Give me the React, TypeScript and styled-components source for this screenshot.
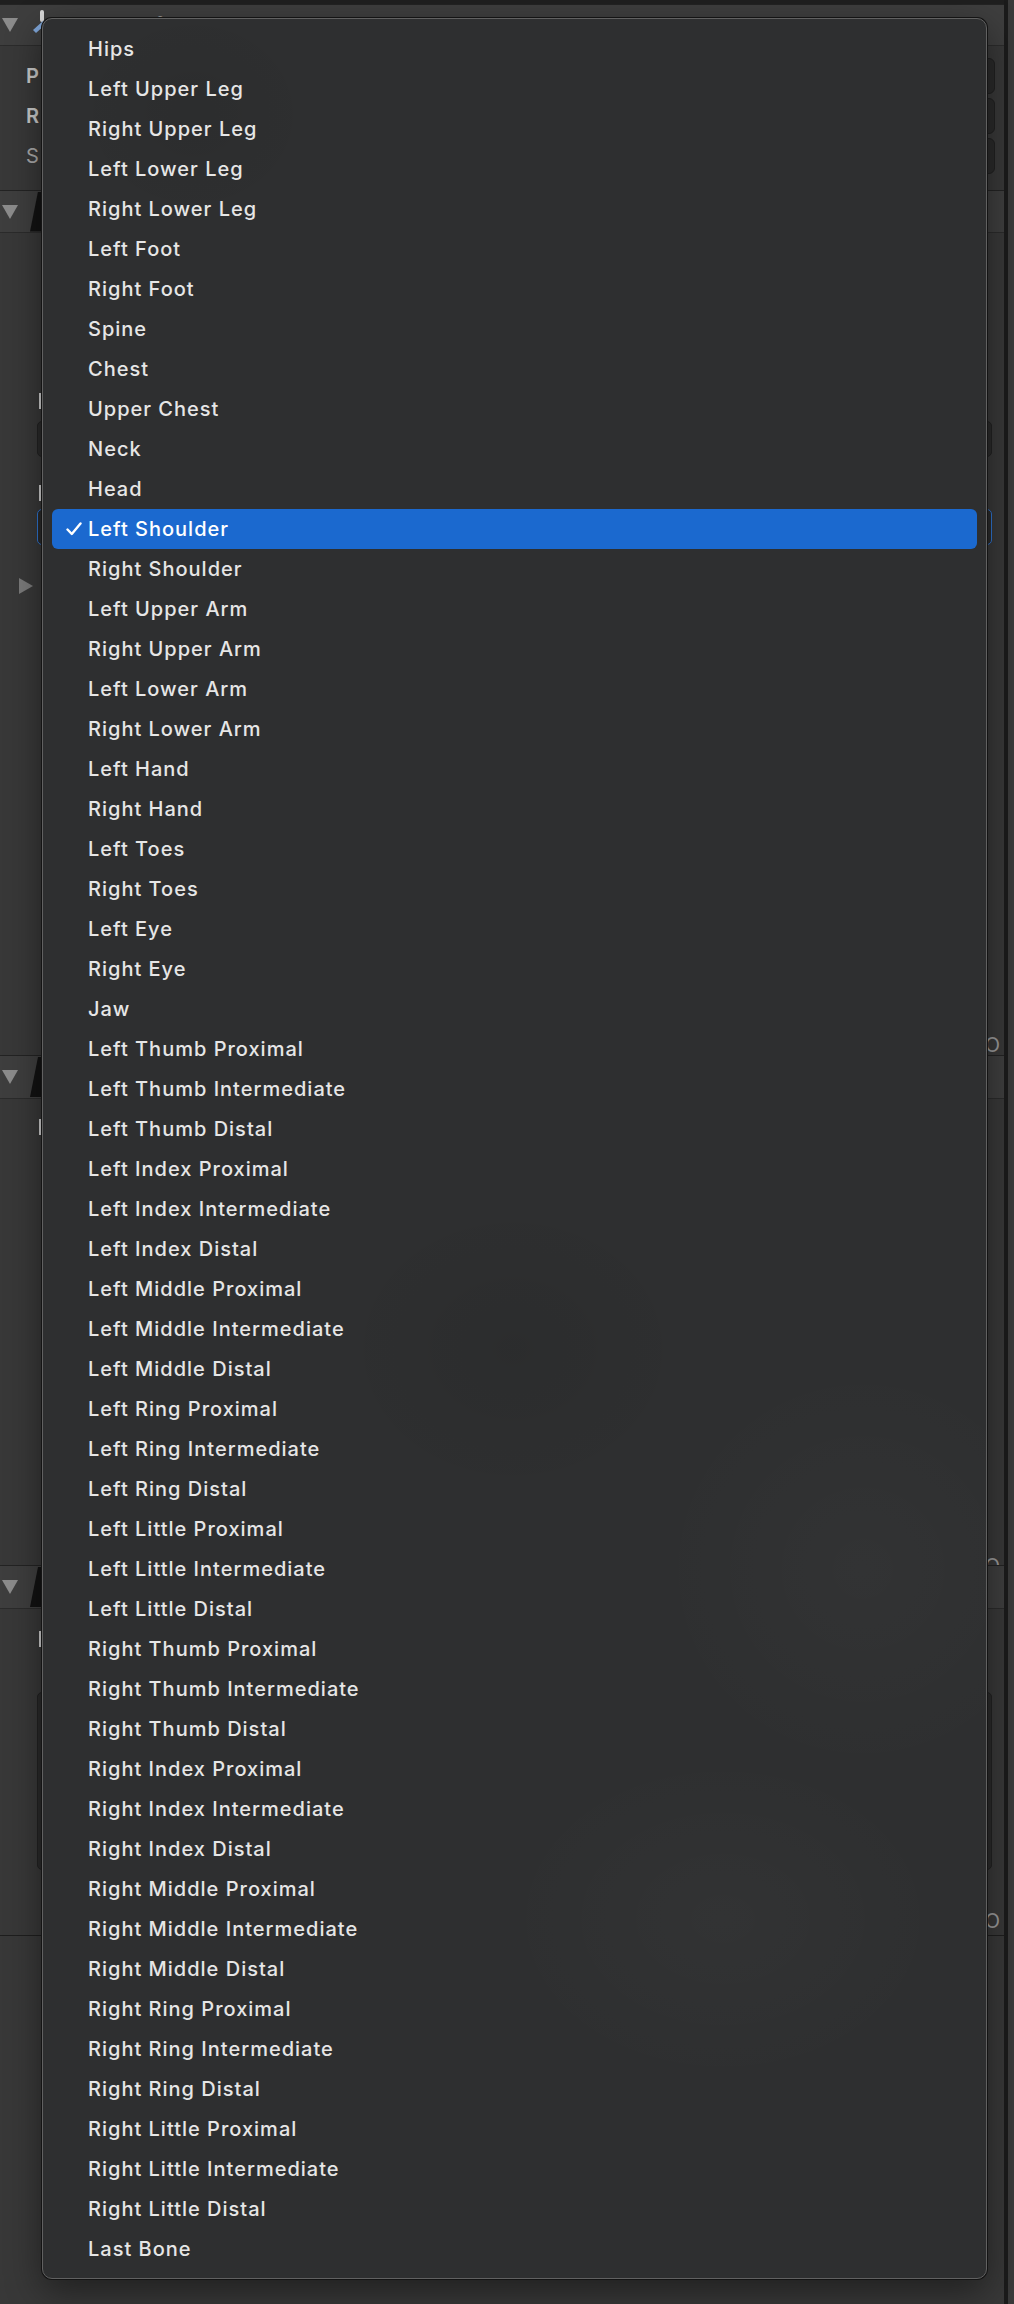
import styled, { createGlobalStyle } from 'styled-components';

const GlobalStyle = createGlobalStyle`
  html, body {
    margin: 0;
    padding: 0;
    background: #383838;
  }
  body {
    font-family: Inter, "Noto Sans", "Liberation Sans", sans-serif;
  }
`;

const BONES = [
  'Hips', 'Left Upper Leg', 'Right Upper Leg', 'Left Lower Leg', 'Right Lower Leg',
  'Left Foot', 'Right Foot', 'Spine', 'Chest', 'Upper Chest', 'Neck', 'Head',
  'Left Shoulder', 'Right Shoulder', 'Left Upper Arm', 'Right Upper Arm',
  'Left Lower Arm', 'Right Lower Arm', 'Left Hand', 'Right Hand', 'Left Toes',
  'Right Toes', 'Left Eye', 'Right Eye', 'Jaw',
  'Left Thumb Proximal', 'Left Thumb Intermediate', 'Left Thumb Distal',
  'Left Index Proximal', 'Left Index Intermediate', 'Left Index Distal',
  'Left Middle Proximal', 'Left Middle Intermediate', 'Left Middle Distal',
  'Left Ring Proximal', 'Left Ring Intermediate', 'Left Ring Distal',
  'Left Little Proximal', 'Left Little Intermediate', 'Left Little Distal',
  'Right Thumb Proximal', 'Right Thumb Intermediate', 'Right Thumb Distal',
  'Right Index Proximal', 'Right Index Intermediate', 'Right Index Distal',
  'Right Middle Proximal', 'Right Middle Intermediate', 'Right Middle Distal',
  'Right Ring Proximal', 'Right Ring Intermediate', 'Right Ring Distal',
  'Right Little Proximal', 'Right Little Intermediate', 'Right Little Distal',
  'Last Bone',
];

const SELECTED = 'Left Shoulder';

/* ---------- inspector behind the popup ---------- */

const Page = styled.div`
  position: relative;
  width: 1014px;
  height: 2304px;
  overflow: hidden;
  display: flex;
  background: #383838;
`;

const Inspector = styled.div`
  flex: 1;
  display: flex;
  flex-direction: column;
  border-top: 4px solid #1f1f1f;
`;

const Scrollbar = styled.div`
  width: 4px;
  background: #1b1b1b;
`;

const Gutter = styled.div`
  width: 6px;
  background: #3a3a3a;
`;

const ComponentHeader = styled.div<{ $tall?: number }>`
  height: ${(p) => p.$tall ?? 40}px;
  display: flex;
  align-items: center;
  gap: 8px;
  padding-left: 2px;
  background: #3e3e3e;
  border-top: 1px solid #232323;
  border-bottom: 1px solid #2b2b2b;
`;

const HeaderTitle = styled.span`
  margin-left: 36px;
  font-size: 21px;
  font-weight: 700;
  color: #d2d2d2;
`;

const HeaderTools = styled.div`
  margin-left: auto;
  margin-right: 26px;
  display: flex;
  align-items: center;
  gap: 22px;
`;

const ToolDot = styled.span<{ $size: number }>`
  width: ${(p) => p.$size}px;
  height: ${(p) => p.$size}px;
  border-radius: 50%;
  background: #c4c4c4;
`;

const Fold = styled.span<{ $open?: boolean }>`
  width: 0;
  height: 0;
  ${(p) =>
    p.$open
      ? `border-left: 8px solid transparent;
         border-right: 8px solid transparent;
         border-top: 14px solid #8c8c8c;`
      : `border-top: 8px solid transparent;
         border-bottom: 8px solid transparent;
         border-left: 14px solid #7a7a7a;`}
`;

const DarkIcon = styled.span`
  width: 20px;
  height: 40px;
  margin-left: 4px;
  background: #121212;
  clip-path: polygon(40% 0, 100% 0, 100% 100%, 0 100%);
`;

const TransformIcon = () => (
  <svg width="22" height="26" viewBox="0 0 22 26" style={{ marginLeft: 4, marginTop: -6 }}>
    <rect x="10" y="1" width="4" height="12" rx="2" fill="#d8d8d8" />
    <path d="M3 21 L13 12 L16 15 L6 24 Z" fill="#7fa6d9" />
  </svg>
);

const Body = styled.div<{ $h: number }>`
  height: ${(p) => p.$h}px;
  display: flex;
  flex-direction: column;
  background: #383838;
`;

const PropRow = styled.div`
  height: 40px;
  display: flex;
  align-items: center;
  justify-content: space-between;
  padding: 0 9px 0 26px;
`;

const PropLabel = styled.span<{ $dim?: boolean }>`
  font-size: 20px;
  font-weight: ${(p) => (p.$dim ? 400 : 600)};
  color: ${(p) => (p.$dim ? '#a8a8a8' : '#c9c9c9')};
`;

const MiniField = styled.span`
  width: 14px;
  height: 34px;
  border-radius: 6px;
  background: #2a2a2a;
  border: 1px solid #202020;
`;

const Spacer = styled.div<{ $h: number }>`
  height: ${(p) => p.$h}px;
  flex-shrink: 0;
`;

const Field = styled.div<{ $h?: number; $active?: boolean }>`
  height: ${(p) => p.$h ?? 34}px;
  margin: 0 12px 0 37px;
  border-radius: 5px;
  background: #2a2a2a;
  border: 1px solid ${(p) => (p.$active ? '#2f74d0' : '#212121')};
  flex-shrink: 0;
`;

const Tick = styled.div`
  height: 16px;
  width: 3px;
  margin-left: 39px;
  background: #cfcfcf;
  flex-shrink: 0;
`;

const SubFold = styled.div`
  height: 30px;
  display: flex;
  align-items: center;
  padding-left: 19px;
  flex-shrink: 0;
`;

const ValueRow = styled.div`
  height: 22px;
  display: flex;
  justify-content: flex-end;
  padding-right: 4px;
  font-size: 20px;
  color: #9a9a9a;
  line-height: 22px;
  flex-shrink: 0;
`;

const Rule = styled.div`
  height: 1px;
  background: #1e1e1e;
`;

/* ---------- popup menu ---------- */

const Menu = styled.div`
  position: absolute;
  left: 42px;
  top: 18px;
  width: 945px;
  box-sizing: border-box;
  padding: 10px 9px 9px;
  border: 1px solid #616161;
  border-radius: 10px;
  background:
    radial-gradient(ellipse 180px 160px at 150px 95px, rgba(0, 0, 0, 0.05), transparent 70%),
    radial-gradient(ellipse 260px 220px at 470px 1330px, rgba(0, 0, 0, 0.06), transparent 70%),
    radial-gradient(ellipse 320px 240px at 680px 1900px, rgba(255, 255, 255, 0.018), transparent 70%),
    radial-gradient(ellipse 300px 300px at 820px 1550px, rgba(255, 255, 255, 0.02), transparent 70%),
    #2e2f30;
  box-shadow: 0 0 0 1px #141414, 0 12px 36px rgba(0, 0, 0, 0.45);
`;

const Item = styled.div<{ $selected?: boolean }>`
  height: 40px;
  display: flex;
  align-items: center;
  border-radius: 6px;
  background: ${(p) => (p.$selected ? '#1b69cf' : 'transparent')};
  color: ${(p) => (p.$selected ? '#ffffff' : '#e6e6e6')};
  font-size: 20px;
  font-weight: 500;
  letter-spacing: 1px;
  white-space: nowrap;
`;

const CheckSlot = styled.span`
  width: 36px;
  display: flex;
  align-items: center;
  padding-left: 14px;
  box-sizing: border-box;
`;

const Check = () => (
  <svg width="16" height="14" viewBox="0 0 16 14">
    <path d="M1.5 7.5 L5.8 12 L14.5 1.5" fill="none" stroke="#fff" strokeWidth="2.4" strokeLinecap="round" strokeLinejoin="round" />
  </svg>
);

export default function App() {
  return (
    <>
      <GlobalStyle />
      <Page>
        <Inspector>
          <ComponentHeader>
            <Fold $open />
            <TransformIcon />
            <HeaderTitle>Transform</HeaderTitle>
            <HeaderTools>
              <ToolDot $size={14} />
              <ToolDot $size={14} />
              <ToolDot $size={14} />
            </HeaderTools>
          </ComponentHeader>
          <Body $h={144}>
            <Spacer $h={10} />
            <PropRow>
              <PropLabel>P</PropLabel>
              <MiniField />
            </PropRow>
            <PropRow>
              <PropLabel>R</PropLabel>
              <MiniField />
            </PropRow>
            <PropRow>
              <PropLabel $dim>S</PropLabel>
              <MiniField />
            </PropRow>
          </Body>
          <ComponentHeader $tall={41}>
            <Fold $open />
            <DarkIcon />
          </ComponentHeader>
          <Body $h={822}>
            <Spacer $h={160} />
            <Tick />
            <Spacer $h={12} />
            <Field />
            <Spacer $h={28} />
            <Tick />
            <Spacer $h={8} />
            <Field $active />
            <Spacer $h={26} />
            <SubFold>
              <Fold />
            </SubFold>
            <Spacer $h={433} />
            <ValueRow>O</ValueRow>
          </Body>
          <ComponentHeader $tall={42}>
            <Fold $open />
            <DarkIcon />
          </ComponentHeader>
          <Body $h={466}>
            <Spacer $h={20} />
            <Tick />
            <Spacer $h={420} />
            <ValueRow>O</ValueRow>
          </Body>
          <ComponentHeader $tall={42}>
            <Fold $open />
            <DarkIcon />
          </ComponentHeader>
          <Body $h={326}>
            <Spacer $h={22} />
            <Tick />
            <Spacer $h={45} />
            <Field $h={176} />
            <Spacer $h={40} />
            <ValueRow>O</ValueRow>
          </Body>
          <Rule />
        </Inspector>
        <Scrollbar />
        <Gutter />

        <Menu>
          {BONES.map((bone) => {
            const selected = bone === SELECTED;
            return (
              <Item key={bone} $selected={selected}>
                <CheckSlot>{selected && <Check />}</CheckSlot>
                {bone}
              </Item>
            );
          })}
        </Menu>
      </Page>
    </>
  );
}
